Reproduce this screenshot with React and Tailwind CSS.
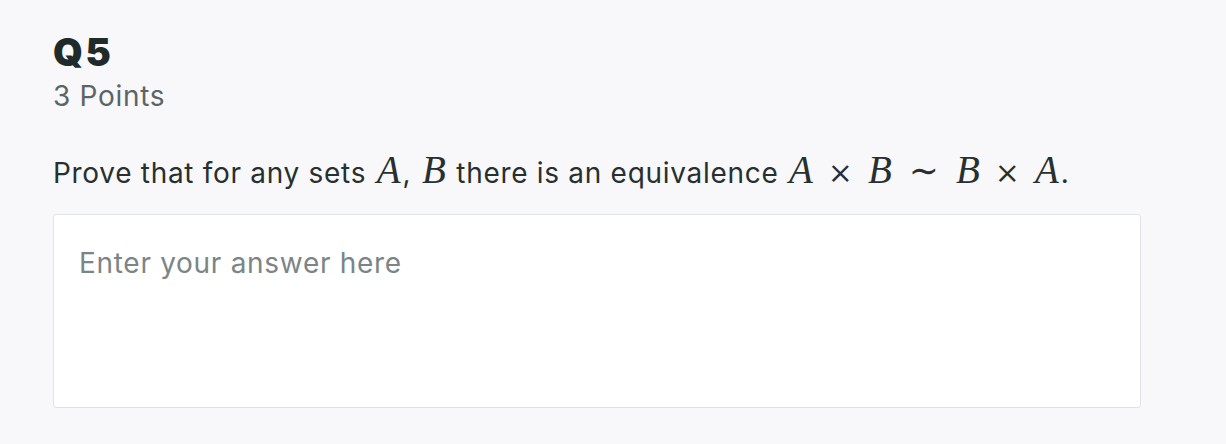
import React from 'react';

const M = ({ children }) => (
  <span className="px-[2px] text-[39px] italic leading-none tracking-normal" style={{ fontFamily: '"Liberation Serif", serif' }}>
    {children}
  </span>
);

const Op = ({ children, rel }) => (
  <span
    className={`${rel ? 'mx-[15px] text-[36px]' : 'mx-[13px] text-[30px]'} leading-none tracking-normal`}
    style={{ fontFamily: '"DejaVu Serif", serif' }}
  >
    {children}
  </span>
);

export default function App() {
  return (
    <div className="min-h-[444px] w-[1226px] bg-[#f8f8fa] px-[53px] pt-[30px] font-['Inter',sans-serif] text-[#27302f]">
      <h2 className="text-[38px] font-black leading-[44px] tracking-[2.5px] text-[#1f2b2b]">Q5</h2>
      <div className="mt-[6px] text-[28px] leading-[32px] tracking-[0.7px] text-[#5b6566]">3 Points</div>

      <p className="mt-[38px] text-[28px] leading-[40px] tracking-[0.7px]">
        Prove that for any sets <M>A</M>,&nbsp;<M>B</M> there is an equivalence <M>A</M>
        <Op>×</Op>
        <M>B</M>
        <Op rel>∼</Op>
        <M>B</M>
        <Op>×</Op>
        <M>A</M>.
      </p>

      <div className="mt-[21px] h-[194px] w-[1088px] rounded-[3px] border border-[#dfe2e6] bg-white px-[25px] pt-[30px]">
        <div className="text-[28px] leading-[36px] tracking-[0.7px] text-[#7b8586]">Enter your answer here</div>
      </div>
    </div>
  );
}
